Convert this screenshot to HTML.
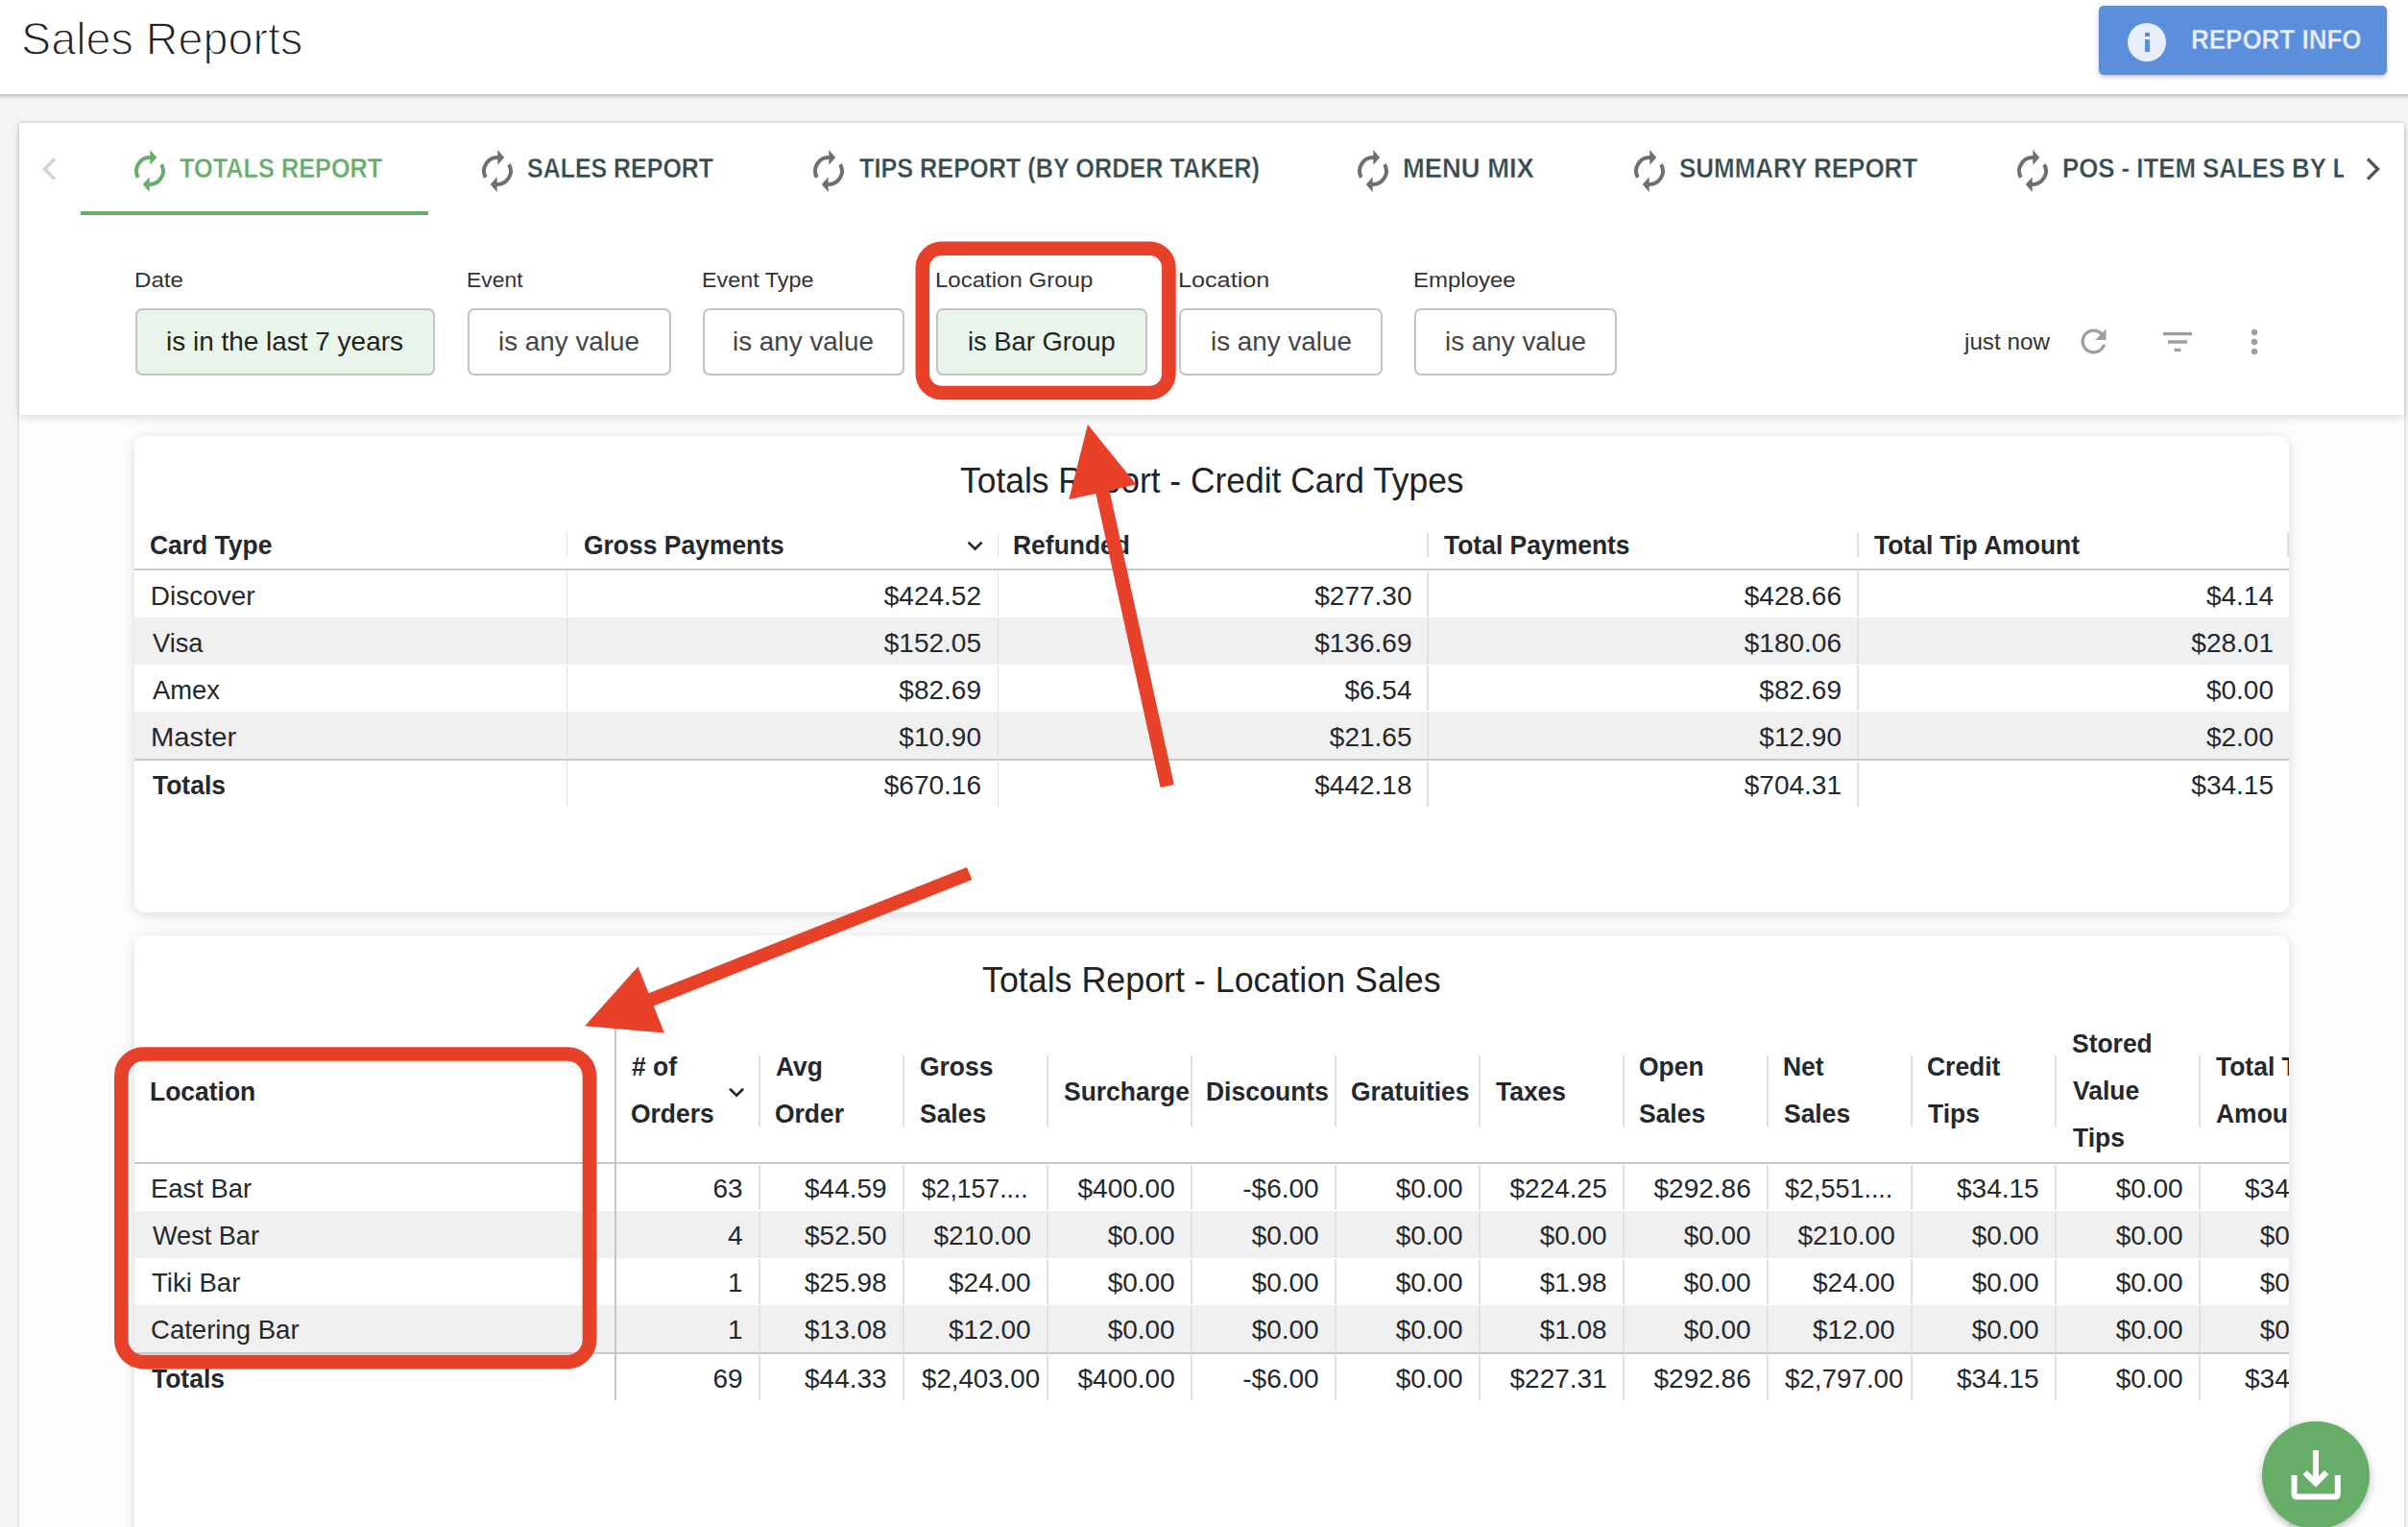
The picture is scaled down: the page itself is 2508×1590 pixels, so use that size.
<!DOCTYPE html>
<html><head><meta charset="utf-8"><title>Sales Reports</title><style>*{margin:0;padding:0}
html,body{width:2508px;height:1590px;overflow:hidden;background:#f4f5f7;font-family:"Liberation Sans",sans-serif;position:relative}
.t{position:absolute;white-space:nowrap;line-height:1;transform-origin:0 0}
.r{position:absolute}
</style></head><body>
<div class="r" style="left:-20px;top:-20px;width:2548px;height:118px;background:#fff;box-shadow:0 1.5px 5px rgba(0,0,0,.30);z-index:2"></div>
<div class="t" style="left:21.86px;top:17.36px;font-size:48px;color:#222;transform:scaleX(0.9731);z-index:3;-webkit-text-stroke:1.3px #fff;">Sales Reports</div>
<div class="r" style="left:2186px;top:6px;width:300px;height:71.5px;background:#5c8fdb;border-radius:5px;box-shadow:0 2px 5px rgba(0,0,0,.25);z-index:3"></div>
<div class="r" style="left:2216px;top:24px;width:40px;height:40px;border-radius:50%;background:#e8eefa;z-index:4"></div>
<div class="r" style="left:2233.5px;top:33.7px;width:5px;height:4.4px;background:#5c8fdb;z-index:5"></div>
<div class="r" style="left:2233.5px;top:40.7px;width:5px;height:13px;background:#5c8fdb;z-index:5"></div>
<div class="t" style="left:2281.70px;top:26.65px;font-size:29px;color:#e9eefa;font-weight:700;transform:scaleX(0.8954);z-index:5;-webkit-text-stroke:0.35px #5c8fdb;">REPORT INFO</div>
<div class="r" style="left:20px;top:128px;width:2484px;height:1600px;background:#fefefe;box-shadow:0 0 3px rgba(0,0,0,.22)"></div>
<div class="r" style="left:20px;top:128px;width:2484px;height:304px;background:#fff;box-shadow:0 3px 10px rgba(0,0,0,.14);z-index:1"></div>
<svg class="r" style="left:136.00px;top:153.90px;z-index:2" width="40" height="48" viewBox="-20 -24 40 48">
<path d="M -12.157 6.739 A 13.9 13.9 0 0 1 1.5 -13.82" fill="none" stroke="#66ad68" stroke-width="4"/>
<path d="M 12.157 -6.739 A 13.9 13.9 0 0 1 -1.5 13.82" fill="none" stroke="#66ad68" stroke-width="4"/>
<path d="M 0.3 -22 L 7.2 -14.1 L 0.3 -6.3 Z" fill="#66ad68"/>
<path d="M -0.3 22 L -7.2 14.1 L -0.3 6.3 Z" fill="#66ad68"/>
</svg>
<div class="t" style="left:186.74px;top:160.65px;font-size:29px;color:#66ad68;font-weight:700;transform:scaleX(0.8725);z-index:2;-webkit-text-stroke:0.35px #fff;">TOTALS REPORT</div>
<svg class="r" style="left:497.90px;top:153.90px;z-index:2" width="40" height="48" viewBox="-20 -24 40 48">
<path d="M -12.157 6.739 A 13.9 13.9 0 0 1 1.5 -13.82" fill="none" stroke="#6f6f6f" stroke-width="4"/>
<path d="M 12.157 -6.739 A 13.9 13.9 0 0 1 -1.5 13.82" fill="none" stroke="#6f6f6f" stroke-width="4"/>
<path d="M 0.3 -22 L 7.2 -14.1 L 0.3 -6.3 Z" fill="#6f6f6f"/>
<path d="M -0.3 22 L -7.2 14.1 L -0.3 6.3 Z" fill="#6f6f6f"/>
</svg>
<div class="t" style="left:549.21px;top:160.65px;font-size:29px;color:#354a4c;font-weight:700;transform:scaleX(0.8601);z-index:2;-webkit-text-stroke:0.35px #fff;">SALES REPORT</div>
<svg class="r" style="left:843.30px;top:153.90px;z-index:2" width="40" height="48" viewBox="-20 -24 40 48">
<path d="M -12.157 6.739 A 13.9 13.9 0 0 1 1.5 -13.82" fill="none" stroke="#6f6f6f" stroke-width="4"/>
<path d="M 12.157 -6.739 A 13.9 13.9 0 0 1 -1.5 13.82" fill="none" stroke="#6f6f6f" stroke-width="4"/>
<path d="M 0.3 -22 L 7.2 -14.1 L 0.3 -6.3 Z" fill="#6f6f6f"/>
<path d="M -0.3 22 L -7.2 14.1 L -0.3 6.3 Z" fill="#6f6f6f"/>
</svg>
<div class="t" style="left:894.54px;top:160.65px;font-size:29px;color:#354a4c;font-weight:700;transform:scaleX(0.8703);z-index:2;-webkit-text-stroke:0.35px #fff;">TIPS REPORT (BY ORDER TAKER)</div>
<svg class="r" style="left:1409.90px;top:153.90px;z-index:2" width="40" height="48" viewBox="-20 -24 40 48">
<path d="M -12.157 6.739 A 13.9 13.9 0 0 1 1.5 -13.82" fill="none" stroke="#6f6f6f" stroke-width="4"/>
<path d="M 12.157 -6.739 A 13.9 13.9 0 0 1 -1.5 13.82" fill="none" stroke="#6f6f6f" stroke-width="4"/>
<path d="M 0.3 -22 L 7.2 -14.1 L 0.3 -6.3 Z" fill="#6f6f6f"/>
<path d="M -0.3 22 L -7.2 14.1 L -0.3 6.3 Z" fill="#6f6f6f"/>
</svg>
<div class="t" style="left:1461.21px;top:160.65px;font-size:29px;color:#354a4c;font-weight:700;transform:scaleX(0.9440);z-index:2;-webkit-text-stroke:0.35px #fff;">MENU MIX</div>
<svg class="r" style="left:1697.50px;top:153.90px;z-index:2" width="40" height="48" viewBox="-20 -24 40 48">
<path d="M -12.157 6.739 A 13.9 13.9 0 0 1 1.5 -13.82" fill="none" stroke="#6f6f6f" stroke-width="4"/>
<path d="M 12.157 -6.739 A 13.9 13.9 0 0 1 -1.5 13.82" fill="none" stroke="#6f6f6f" stroke-width="4"/>
<path d="M 0.3 -22 L 7.2 -14.1 L 0.3 -6.3 Z" fill="#6f6f6f"/>
<path d="M -0.3 22 L -7.2 14.1 L -0.3 6.3 Z" fill="#6f6f6f"/>
</svg>
<div class="t" style="left:1748.98px;top:160.65px;font-size:29px;color:#354a4c;font-weight:700;transform:scaleX(0.8957);z-index:2;-webkit-text-stroke:0.35px #fff;">SUMMARY REPORT</div>
<svg class="r" style="left:2096.50px;top:153.90px;z-index:2" width="40" height="48" viewBox="-20 -24 40 48">
<path d="M -12.157 6.739 A 13.9 13.9 0 0 1 1.5 -13.82" fill="none" stroke="#6f6f6f" stroke-width="4"/>
<path d="M 12.157 -6.739 A 13.9 13.9 0 0 1 -1.5 13.82" fill="none" stroke="#6f6f6f" stroke-width="4"/>
<path d="M 0.3 -22 L 7.2 -14.1 L 0.3 -6.3 Z" fill="#6f6f6f"/>
<path d="M -0.3 22 L -7.2 14.1 L -0.3 6.3 Z" fill="#6f6f6f"/>
</svg>
<div class="r" style="left:0;top:120px;width:2441px;height:120px;overflow:hidden;z-index:2">
<div class="t" style="left:2147.51px;top:40.65px;font-size:29px;color:#354a4c;font-weight:700;transform:scaleX(0.8885);-webkit-text-stroke:0.35px #fff;">POS - ITEM SALES BY LOCATION</div>
</div>
<div class="r" style="left:84.20px;top:220.00px;width:361.60px;height:4.00px;background:#66ad68;z-index:2;"></div>
<svg class="r" style="left:36px;top:160px;z-index:2" width="30" height="32" viewBox="0 0 30 32"><path d="M 21 5.5 L 10.5 16 L 21 26.5" fill="none" stroke="#d6d6d6" stroke-width="3.6"/></svg>
<svg class="r" style="left:2456px;top:160px;z-index:2" width="30" height="32" viewBox="0 0 30 32"><path d="M 10 5.5 L 20.5 16 L 10 26.5" fill="none" stroke="#555" stroke-width="3.4"/></svg>
<div class="t" style="left:139.57px;top:280.95px;font-size:22.5px;color:#333;transform:scaleX(1.0716);z-index:2;">Date</div>
<div class="r" style="left:140.50px;top:320.6px;width:312.90px;height:70.8px;box-sizing:border-box;border:2px solid #c3c3c3;border-radius:7px;background:#e9f4ea;z-index:2"></div>
<div class="t" style="left:173.05px;top:342.29px;font-size:28px;color:#1e2420;transform:scaleX(0.9980);z-index:3;">is in the last 7 years</div>
<div class="t" style="left:485.97px;top:280.95px;font-size:22.5px;color:#333;transform:scaleX(1.0180);z-index:2;">Event</div>
<div class="r" style="left:486.80px;top:320.6px;width:211.80px;height:70.8px;box-sizing:border-box;border:2px solid #c3c3c3;border-radius:7px;background:#fff;z-index:2"></div>
<div class="t" style="left:518.91px;top:342.29px;font-size:28px;color:#454545;transform:scaleX(0.9938);z-index:3;">is any value</div>
<div class="t" style="left:730.83px;top:280.95px;font-size:22.5px;color:#333;transform:scaleX(1.0393);z-index:2;">Event Type</div>
<div class="r" style="left:731.70px;top:320.6px;width:210.60px;height:70.8px;box-sizing:border-box;border:2px solid #c3c3c3;border-radius:7px;background:#fff;z-index:2"></div>
<div class="t" style="left:763.21px;top:342.29px;font-size:28px;color:#454545;transform:scaleX(0.9938);z-index:3;">is any value</div>
<div class="t" style="left:974.48px;top:280.95px;font-size:22.5px;color:#333;transform:scaleX(1.0675);z-index:2;">Location Group</div>
<div class="r" style="left:975.40px;top:320.6px;width:220.10px;height:70.8px;box-sizing:border-box;border:2px solid #c3c3c3;border-radius:7px;background:#e9f4ea;z-index:2"></div>
<div class="t" style="left:1008.29px;top:342.29px;font-size:28px;color:#1e2420;transform:scaleX(0.9773);z-index:3;">is Bar Group</div>
<div class="t" style="left:1227.38px;top:280.95px;font-size:22.5px;color:#333;transform:scaleX(1.1197);z-index:2;">Location</div>
<div class="r" style="left:1228.40px;top:320.6px;width:212.10px;height:70.8px;box-sizing:border-box;border:2px solid #c3c3c3;border-radius:7px;background:#fff;z-index:2"></div>
<div class="t" style="left:1260.66px;top:342.29px;font-size:28px;color:#454545;transform:scaleX(0.9938);z-index:3;">is any value</div>
<div class="t" style="left:1471.78px;top:280.95px;font-size:22.5px;color:#333;transform:scaleX(1.0658);z-index:2;">Employee</div>
<div class="r" style="left:1472.70px;top:320.6px;width:211.70px;height:70.8px;box-sizing:border-box;border:2px solid #c3c3c3;border-radius:7px;background:#fff;z-index:2"></div>
<div class="t" style="left:1504.76px;top:342.29px;font-size:28px;color:#454545;transform:scaleX(0.9938);z-index:3;">is any value</div>
<div class="t" style="left:2046.01px;top:343.78px;font-size:24px;color:#333;transform:scaleX(1.0101);z-index:2;">just now</div>
<svg class="r" style="left:2160.8px;top:335.9px;z-index:2" width="39.1" height="39.1" viewBox="0 0 24 24"><path fill="#9e9e9e" d="M17.65 6.35C16.2 4.9 14.21 4 12 4c-4.42 0-7.99 3.58-7.99 8s3.57 8 7.99 8c3.73 0 6.84-2.55 7.73-6h-2.08c-.82 2.33-3.04 4-5.65 4-3.31 0-6-2.69-6-6s2.69-6 6-6c1.66 0 3.14.69 4.22 1.78L13 11h7V4l-2.35 2.35z"/></svg>
<svg class="r" style="left:2247.9px;top:335.7px;z-index:2" width="40" height="40" viewBox="0 0 24 24"><path fill="#9e9e9e" d="M10 18h4v-2h-4v2zM3 6v2h18V6H3zm3 7h12v-2H6v2z"/></svg>
<svg class="r" style="left:2327.8px;top:335.7px;z-index:2" width="40" height="40" viewBox="0 0 24 24"><path fill="#9e9e9e" d="M12 8c1.1 0 2-.9 2-2s-.9-2-2-2-2 .9-2 2 .9 2 2 2zm0 2c-1.1 0-2 .9-2 2s.9 2 2 2 2-.9 2-2-.9-2-2-2zm0 6c-1.1 0-2 .9-2 2s.9 2 2 2 2-.9 2-2-.9-2-2-2z"/></svg>
<div class="r" style="left:140px;top:454px;width:2244px;height:496px;background:#fff;border-radius:10px;box-shadow:0 3px 12px rgba(0,0,0,.11),0 0 28px rgba(0,0,0,.05);"></div>
<div class="t" style="left:999.72px;top:482.80px;font-size:36.5px;color:#222;transform:scaleX(0.9697);">Totals Report - Credit Card Types</div>
<div class="t" style="left:155.56px;top:553.59px;font-size:28px;color:#24282c;font-weight:700;transform:scaleX(0.9448);">Card Type</div>
<div class="t" style="left:607.66px;top:553.59px;font-size:28px;color:#24282c;font-weight:700;transform:scaleX(0.9448);">Gross Payments</div>
<div class="t" style="left:1055.40px;top:553.59px;font-size:28px;color:#24282c;font-weight:700;transform:scaleX(0.9448);">Refunded</div>
<div class="t" style="left:1504.42px;top:553.59px;font-size:28px;color:#24282c;font-weight:700;transform:scaleX(0.9448);">Total Payments</div>
<div class="t" style="left:1952.12px;top:553.59px;font-size:28px;color:#24282c;font-weight:700;transform:scaleX(0.9448);">Total Tip Amount</div>
<div class="r" style="left:589.85px;top:555.30px;width:1.60px;height:24.50px;background:#dfe0e2;"></div>
<div class="r" style="left:1038.55px;top:555.30px;width:1.60px;height:24.50px;background:#dfe0e2;"></div>
<div class="r" style="left:1486.25px;top:555.30px;width:1.60px;height:24.50px;background:#dfe0e2;"></div>
<div class="r" style="left:1934.25px;top:555.30px;width:1.60px;height:24.50px;background:#dfe0e2;"></div>
<div class="r" style="left:2382.25px;top:555.30px;width:1.60px;height:24.50px;background:#dfe0e2;"></div>
<svg class="r" style="left:1000px;top:555px" width="32" height="24" viewBox="1000 555 32 24"><path d="M 1008.6 564.6 L 1015.6 571.6 L 1022.6 564.6" fill="none" stroke="#24282c" stroke-width="2.7"/></svg>
<div class="r" style="left:140.00px;top:592.00px;width:2244.00px;height:2.20px;background:#c6cacd;"></div>
<div class="r" style="left:589.85px;top:594.80px;width:1.60px;height:47.40px;background:#dfe0e2;"></div>
<div class="r" style="left:1038.55px;top:594.80px;width:1.60px;height:47.40px;background:#dfe0e2;"></div>
<div class="r" style="left:1486.25px;top:594.80px;width:1.60px;height:47.40px;background:#dfe0e2;"></div>
<div class="r" style="left:1934.25px;top:594.80px;width:1.60px;height:47.40px;background:#dfe0e2;"></div>
<div class="t" style="left:156.70px;top:606.59px;font-size:28px;color:#24282c;">Discover</div>
<div class="t" style="left:920.79px;top:606.59px;font-size:28px;color:#24282c;">$424.52</div>
<div class="t" style="left:1369.29px;top:606.59px;font-size:28px;color:#24282c;">$277.30</div>
<div class="t" style="left:1816.79px;top:606.59px;font-size:28px;color:#24282c;">$428.66</div>
<div class="t" style="left:2297.93px;top:606.59px;font-size:28px;color:#24282c;">$4.14</div>
<div class="r" style="left:140.00px;top:643.00px;width:2244.00px;height:49.00px;background:#f0f0f0;"></div>
<div class="r" style="left:589.85px;top:643.80px;width:1.60px;height:47.40px;background:#dfe0e2;"></div>
<div class="r" style="left:1038.55px;top:643.80px;width:1.60px;height:47.40px;background:#dfe0e2;"></div>
<div class="r" style="left:1486.25px;top:643.80px;width:1.60px;height:47.40px;background:#dfe0e2;"></div>
<div class="r" style="left:1934.25px;top:643.80px;width:1.60px;height:47.40px;background:#dfe0e2;"></div>
<div class="t" style="left:158.90px;top:655.59px;font-size:28px;color:#24282c;transform:scaleX(0.9703);">Visa</div>
<div class="t" style="left:920.79px;top:655.59px;font-size:28px;color:#24282c;">$152.05</div>
<div class="t" style="left:1369.29px;top:655.59px;font-size:28px;color:#24282c;">$136.69</div>
<div class="t" style="left:1816.79px;top:655.59px;font-size:28px;color:#24282c;">$180.06</div>
<div class="t" style="left:2282.36px;top:655.59px;font-size:28px;color:#24282c;">$28.01</div>
<div class="r" style="left:589.85px;top:692.80px;width:1.60px;height:47.40px;background:#dfe0e2;"></div>
<div class="r" style="left:1038.55px;top:692.80px;width:1.60px;height:47.40px;background:#dfe0e2;"></div>
<div class="r" style="left:1486.25px;top:692.80px;width:1.60px;height:47.40px;background:#dfe0e2;"></div>
<div class="r" style="left:1934.25px;top:692.80px;width:1.60px;height:47.40px;background:#dfe0e2;"></div>
<div class="t" style="left:158.90px;top:704.59px;font-size:28px;color:#24282c;transform:scaleX(0.9789);">Amex</div>
<div class="t" style="left:936.36px;top:704.59px;font-size:28px;color:#24282c;">$82.69</div>
<div class="t" style="left:1400.43px;top:704.59px;font-size:28px;color:#24282c;">$6.54</div>
<div class="t" style="left:1832.36px;top:704.59px;font-size:28px;color:#24282c;">$82.69</div>
<div class="t" style="left:2297.93px;top:704.59px;font-size:28px;color:#24282c;">$0.00</div>
<div class="r" style="left:140.00px;top:741.00px;width:2244.00px;height:49.00px;background:#f0f0f0;"></div>
<div class="r" style="left:589.85px;top:741.80px;width:1.60px;height:47.40px;background:#dfe0e2;"></div>
<div class="r" style="left:1038.55px;top:741.80px;width:1.60px;height:47.40px;background:#dfe0e2;"></div>
<div class="r" style="left:1486.25px;top:741.80px;width:1.60px;height:47.40px;background:#dfe0e2;"></div>
<div class="r" style="left:1934.25px;top:741.80px;width:1.60px;height:47.40px;background:#dfe0e2;"></div>
<div class="t" style="left:156.60px;top:753.59px;font-size:28px;color:#24282c;transform:scaleX(1.0423);">Master</div>
<div class="t" style="left:936.36px;top:753.59px;font-size:28px;color:#24282c;">$10.90</div>
<div class="t" style="left:1384.86px;top:753.59px;font-size:28px;color:#24282c;">$21.65</div>
<div class="t" style="left:1832.36px;top:753.59px;font-size:28px;color:#24282c;">$12.90</div>
<div class="t" style="left:2297.93px;top:753.59px;font-size:28px;color:#24282c;">$2.00</div>
<div class="r" style="left:140.00px;top:790.30px;width:2244.00px;height:2.20px;background:#c6cacd;"></div>
<div class="r" style="left:589.85px;top:793.00px;width:1.60px;height:47.00px;background:#dfe0e2;"></div>
<div class="r" style="left:1038.55px;top:793.00px;width:1.60px;height:47.00px;background:#dfe0e2;"></div>
<div class="r" style="left:1486.25px;top:793.00px;width:1.60px;height:47.00px;background:#dfe0e2;"></div>
<div class="r" style="left:1934.25px;top:793.00px;width:1.60px;height:47.00px;background:#dfe0e2;"></div>
<div class="t" style="left:158.72px;top:803.89px;font-size:28px;color:#24282c;font-weight:700;transform:scaleX(0.9448);">Totals</div>
<div class="t" style="left:920.79px;top:803.89px;font-size:28px;color:#24282c;">$670.16</div>
<div class="t" style="left:1369.29px;top:803.89px;font-size:28px;color:#24282c;">$442.18</div>
<div class="t" style="left:1816.79px;top:803.89px;font-size:28px;color:#24282c;">$704.31</div>
<div class="t" style="left:2282.36px;top:803.89px;font-size:28px;color:#24282c;">$34.15</div>
<div class="r" style="left:140px;top:974px;width:2244px;height:700px;background:#fff;border-radius:10px;box-shadow:0 3px 12px rgba(0,0,0,.11),0 0 28px rgba(0,0,0,.05);"></div>
<div class="t" style="left:1023.42px;top:1002.90px;font-size:36.5px;color:#222;transform:scaleX(0.9808);">Totals Report - Location Sales</div>
<div class="r" style="left:140px;top:974px;width:2244px;height:700px;overflow:hidden">
<div class="t" style="left:15.50px;top:148.59px;font-size:28px;color:#24282c;font-weight:700;transform:scaleX(0.9448);">Location</div>
<div class="t" style="left:518.03px;top:122.89px;font-size:28px;color:#24282c;font-weight:700;transform:scaleX(0.9448);"># of</div>
<div class="t" style="left:517.46px;top:171.79px;font-size:28px;color:#24282c;font-weight:700;transform:scaleX(0.9448);">Orders</div>
<div class="t" style="left:667.54px;top:122.89px;font-size:28px;color:#24282c;font-weight:700;transform:scaleX(0.9448);">Avg</div>
<div class="t" style="left:667.16px;top:171.79px;font-size:28px;color:#24282c;font-weight:700;transform:scaleX(0.9448);">Order</div>
<div class="t" style="left:817.86px;top:122.89px;font-size:28px;color:#24282c;font-weight:700;transform:scaleX(0.9448);">Gross</div>
<div class="t" style="left:818.14px;top:171.79px;font-size:28px;color:#24282c;font-weight:700;transform:scaleX(0.9448);">Sales</div>
<div class="r" style="left:951px;top:116px;width:150px;height:80px;overflow:hidden">
<div class="t" style="left:16.74px;top:32.59px;font-size:28px;color:#24282c;font-weight:700;transform:scaleX(0.9448);">Surcharges</div>
</div>
<div class="t" style="left:1116.20px;top:148.59px;font-size:28px;color:#24282c;font-weight:700;transform:scaleX(0.9448);">Discounts</div>
<div class="t" style="left:1267.26px;top:148.59px;font-size:28px;color:#24282c;font-weight:700;transform:scaleX(0.9448);">Gratuities</div>
<div class="t" style="left:1418.22px;top:148.59px;font-size:28px;color:#24282c;font-weight:700;transform:scaleX(0.9448);">Taxes</div>
<div class="t" style="left:1567.16px;top:122.89px;font-size:28px;color:#24282c;font-weight:700;transform:scaleX(0.9448);">Open</div>
<div class="t" style="left:1567.44px;top:171.79px;font-size:28px;color:#24282c;font-weight:700;transform:scaleX(0.9448);">Sales</div>
<div class="t" style="left:1716.70px;top:122.89px;font-size:28px;color:#24282c;font-weight:700;transform:scaleX(0.9448);">Net</div>
<div class="t" style="left:1717.74px;top:171.79px;font-size:28px;color:#24282c;font-weight:700;transform:scaleX(0.9448);">Sales</div>
<div class="t" style="left:1867.06px;top:122.89px;font-size:28px;color:#24282c;font-weight:700;transform:scaleX(0.9448);">Credit</div>
<div class="t" style="left:1867.82px;top:171.79px;font-size:28px;color:#24282c;font-weight:700;transform:scaleX(0.9448);">Tips</div>
<div class="t" style="left:2018.04px;top:99.09px;font-size:28px;color:#24282c;font-weight:700;transform:scaleX(0.9448);">Stored</div>
<div class="t" style="left:2018.61px;top:147.69px;font-size:28px;color:#24282c;font-weight:700;transform:scaleX(0.9448);">Value</div>
<div class="t" style="left:2018.52px;top:196.69px;font-size:28px;color:#24282c;font-weight:700;transform:scaleX(0.9448);">Tips</div>
<div class="t" style="left:2167.92px;top:122.89px;font-size:28px;color:#24282c;font-weight:700;transform:scaleX(0.9448);">Total Tip</div>
<div class="t" style="left:2167.54px;top:171.79px;font-size:28px;color:#24282c;font-weight:700;transform:scaleX(0.9448);">Amount</div>
<div class="r" style="left:650.15px;top:125.30px;width:1.60px;height:73.50px;background:#dfe0e2;"></div>
<div class="r" style="left:800.25px;top:125.30px;width:1.60px;height:73.50px;background:#dfe0e2;"></div>
<div class="r" style="left:950.25px;top:125.30px;width:1.60px;height:73.50px;background:#dfe0e2;"></div>
<div class="r" style="left:1100.25px;top:125.30px;width:1.60px;height:73.50px;background:#dfe0e2;"></div>
<div class="r" style="left:1250.25px;top:125.30px;width:1.60px;height:73.50px;background:#dfe0e2;"></div>
<div class="r" style="left:1400.25px;top:125.30px;width:1.60px;height:73.50px;background:#dfe0e2;"></div>
<div class="r" style="left:1550.25px;top:125.30px;width:1.60px;height:73.50px;background:#dfe0e2;"></div>
<div class="r" style="left:1700.25px;top:125.30px;width:1.60px;height:73.50px;background:#dfe0e2;"></div>
<div class="r" style="left:1850.25px;top:125.30px;width:1.60px;height:73.50px;background:#dfe0e2;"></div>
<div class="r" style="left:2000.25px;top:125.30px;width:1.60px;height:73.50px;background:#dfe0e2;"></div>
<div class="r" style="left:2150.25px;top:125.30px;width:1.60px;height:73.50px;background:#dfe0e2;"></div>
<div class="r" style="left:499.70px;top:97.00px;width:2.00px;height:387.00px;background:#c2c6c9;z-index:1;"></div>
<svg class="r" style="left:610px;top:151px" width="30" height="24" viewBox="750 1125 30 24"><path d="M 760.1 1133.7 L 767.1 1140.7 L 774.1 1133.7" fill="none" stroke="#24282c" stroke-width="2.7"/></svg>
<div class="r" style="left:0.00px;top:236.00px;width:2244.00px;height:2.20px;background:#c6cacd;"></div>
<div class="r" style="left:650.15px;top:238.80px;width:1.60px;height:47.40px;background:#dfe0e2;"></div>
<div class="r" style="left:800.25px;top:238.80px;width:1.60px;height:47.40px;background:#dfe0e2;"></div>
<div class="r" style="left:950.25px;top:238.80px;width:1.60px;height:47.40px;background:#dfe0e2;"></div>
<div class="r" style="left:1100.25px;top:238.80px;width:1.60px;height:47.40px;background:#dfe0e2;"></div>
<div class="r" style="left:1250.25px;top:238.80px;width:1.60px;height:47.40px;background:#dfe0e2;"></div>
<div class="r" style="left:1400.25px;top:238.80px;width:1.60px;height:47.40px;background:#dfe0e2;"></div>
<div class="r" style="left:1550.25px;top:238.80px;width:1.60px;height:47.40px;background:#dfe0e2;"></div>
<div class="r" style="left:1700.25px;top:238.80px;width:1.60px;height:47.40px;background:#dfe0e2;"></div>
<div class="r" style="left:1850.25px;top:238.80px;width:1.60px;height:47.40px;background:#dfe0e2;"></div>
<div class="r" style="left:2000.25px;top:238.80px;width:1.60px;height:47.40px;background:#dfe0e2;"></div>
<div class="r" style="left:2150.25px;top:238.80px;width:1.60px;height:47.40px;background:#dfe0e2;"></div>
<div class="t" style="left:16.55px;top:249.79px;font-size:28px;color:#24282c;transform:scaleX(0.9790);">East Bar</div>
<div class="t" style="left:602.46px;top:249.79px;font-size:28px;color:#24282c;">63</div>
<div class="t" style="left:698.06px;top:249.79px;font-size:28px;color:#24282c;">$44.59</div>
<div class="t" style="left:982.49px;top:249.79px;font-size:28px;color:#24282c;">$400.00</div>
<div class="t" style="left:1154.31px;top:249.79px;font-size:28px;color:#24282c;">-$6.00</div>
<div class="t" style="left:1313.63px;top:249.79px;font-size:28px;color:#24282c;">$0.00</div>
<div class="t" style="left:1432.49px;top:249.79px;font-size:28px;color:#24282c;">$224.25</div>
<div class="t" style="left:1582.49px;top:249.79px;font-size:28px;color:#24282c;">$292.86</div>
<div class="t" style="left:1898.06px;top:249.79px;font-size:28px;color:#24282c;">$34.15</div>
<div class="t" style="left:2063.63px;top:249.79px;font-size:28px;color:#24282c;">$0.00</div>
<div class="t" style="left:2198.06px;top:249.79px;font-size:28px;color:#24282c;">$34.15</div>
<div class="r" style="left:0.00px;top:287.00px;width:2244.00px;height:49.00px;background:#f0f0f0;"></div>
<div class="r" style="left:650.15px;top:287.80px;width:1.60px;height:47.40px;background:#dfe0e2;"></div>
<div class="r" style="left:800.25px;top:287.80px;width:1.60px;height:47.40px;background:#dfe0e2;"></div>
<div class="r" style="left:950.25px;top:287.80px;width:1.60px;height:47.40px;background:#dfe0e2;"></div>
<div class="r" style="left:1100.25px;top:287.80px;width:1.60px;height:47.40px;background:#dfe0e2;"></div>
<div class="r" style="left:1250.25px;top:287.80px;width:1.60px;height:47.40px;background:#dfe0e2;"></div>
<div class="r" style="left:1400.25px;top:287.80px;width:1.60px;height:47.40px;background:#dfe0e2;"></div>
<div class="r" style="left:1550.25px;top:287.80px;width:1.60px;height:47.40px;background:#dfe0e2;"></div>
<div class="r" style="left:1700.25px;top:287.80px;width:1.60px;height:47.40px;background:#dfe0e2;"></div>
<div class="r" style="left:1850.25px;top:287.80px;width:1.60px;height:47.40px;background:#dfe0e2;"></div>
<div class="r" style="left:2000.25px;top:287.80px;width:1.60px;height:47.40px;background:#dfe0e2;"></div>
<div class="r" style="left:2150.25px;top:287.80px;width:1.60px;height:47.40px;background:#dfe0e2;"></div>
<div class="t" style="left:18.70px;top:298.79px;font-size:28px;color:#24282c;transform:scaleX(0.9676);">West Bar</div>
<div class="t" style="left:618.03px;top:298.79px;font-size:28px;color:#24282c;">4</div>
<div class="t" style="left:698.06px;top:298.79px;font-size:28px;color:#24282c;">$52.50</div>
<div class="t" style="left:832.49px;top:298.79px;font-size:28px;color:#24282c;">$210.00</div>
<div class="t" style="left:1013.63px;top:298.79px;font-size:28px;color:#24282c;">$0.00</div>
<div class="t" style="left:1163.63px;top:298.79px;font-size:28px;color:#24282c;">$0.00</div>
<div class="t" style="left:1313.63px;top:298.79px;font-size:28px;color:#24282c;">$0.00</div>
<div class="t" style="left:1463.63px;top:298.79px;font-size:28px;color:#24282c;">$0.00</div>
<div class="t" style="left:1613.63px;top:298.79px;font-size:28px;color:#24282c;">$0.00</div>
<div class="t" style="left:1732.49px;top:298.79px;font-size:28px;color:#24282c;">$210.00</div>
<div class="t" style="left:1913.63px;top:298.79px;font-size:28px;color:#24282c;">$0.00</div>
<div class="t" style="left:2063.63px;top:298.79px;font-size:28px;color:#24282c;">$0.00</div>
<div class="t" style="left:2213.63px;top:298.79px;font-size:28px;color:#24282c;">$0.00</div>
<div class="r" style="left:650.15px;top:336.80px;width:1.60px;height:47.40px;background:#dfe0e2;"></div>
<div class="r" style="left:800.25px;top:336.80px;width:1.60px;height:47.40px;background:#dfe0e2;"></div>
<div class="r" style="left:950.25px;top:336.80px;width:1.60px;height:47.40px;background:#dfe0e2;"></div>
<div class="r" style="left:1100.25px;top:336.80px;width:1.60px;height:47.40px;background:#dfe0e2;"></div>
<div class="r" style="left:1250.25px;top:336.80px;width:1.60px;height:47.40px;background:#dfe0e2;"></div>
<div class="r" style="left:1400.25px;top:336.80px;width:1.60px;height:47.40px;background:#dfe0e2;"></div>
<div class="r" style="left:1550.25px;top:336.80px;width:1.60px;height:47.40px;background:#dfe0e2;"></div>
<div class="r" style="left:1700.25px;top:336.80px;width:1.60px;height:47.40px;background:#dfe0e2;"></div>
<div class="r" style="left:1850.25px;top:336.80px;width:1.60px;height:47.40px;background:#dfe0e2;"></div>
<div class="r" style="left:2000.25px;top:336.80px;width:1.60px;height:47.40px;background:#dfe0e2;"></div>
<div class="r" style="left:2150.25px;top:336.80px;width:1.60px;height:47.40px;background:#dfe0e2;"></div>
<div class="t" style="left:18.21px;top:347.79px;font-size:28px;color:#24282c;transform:scaleX(0.9838);">Tiki Bar</div>
<div class="t" style="left:618.03px;top:347.79px;font-size:28px;color:#24282c;">1</div>
<div class="t" style="left:698.06px;top:347.79px;font-size:28px;color:#24282c;">$25.98</div>
<div class="t" style="left:848.06px;top:347.79px;font-size:28px;color:#24282c;">$24.00</div>
<div class="t" style="left:1013.63px;top:347.79px;font-size:28px;color:#24282c;">$0.00</div>
<div class="t" style="left:1163.63px;top:347.79px;font-size:28px;color:#24282c;">$0.00</div>
<div class="t" style="left:1313.63px;top:347.79px;font-size:28px;color:#24282c;">$0.00</div>
<div class="t" style="left:1463.63px;top:347.79px;font-size:28px;color:#24282c;">$1.98</div>
<div class="t" style="left:1613.63px;top:347.79px;font-size:28px;color:#24282c;">$0.00</div>
<div class="t" style="left:1748.06px;top:347.79px;font-size:28px;color:#24282c;">$24.00</div>
<div class="t" style="left:1913.63px;top:347.79px;font-size:28px;color:#24282c;">$0.00</div>
<div class="t" style="left:2063.63px;top:347.79px;font-size:28px;color:#24282c;">$0.00</div>
<div class="t" style="left:2213.63px;top:347.79px;font-size:28px;color:#24282c;">$0.00</div>
<div class="r" style="left:0.00px;top:385.00px;width:2244.00px;height:49.00px;background:#f0f0f0;"></div>
<div class="r" style="left:650.15px;top:385.80px;width:1.60px;height:47.40px;background:#dfe0e2;"></div>
<div class="r" style="left:800.25px;top:385.80px;width:1.60px;height:47.40px;background:#dfe0e2;"></div>
<div class="r" style="left:950.25px;top:385.80px;width:1.60px;height:47.40px;background:#dfe0e2;"></div>
<div class="r" style="left:1100.25px;top:385.80px;width:1.60px;height:47.40px;background:#dfe0e2;"></div>
<div class="r" style="left:1250.25px;top:385.80px;width:1.60px;height:47.40px;background:#dfe0e2;"></div>
<div class="r" style="left:1400.25px;top:385.80px;width:1.60px;height:47.40px;background:#dfe0e2;"></div>
<div class="r" style="left:1550.25px;top:385.80px;width:1.60px;height:47.40px;background:#dfe0e2;"></div>
<div class="r" style="left:1700.25px;top:385.80px;width:1.60px;height:47.40px;background:#dfe0e2;"></div>
<div class="r" style="left:1850.25px;top:385.80px;width:1.60px;height:47.40px;background:#dfe0e2;"></div>
<div class="r" style="left:2000.25px;top:385.80px;width:1.60px;height:47.40px;background:#dfe0e2;"></div>
<div class="r" style="left:2150.25px;top:385.80px;width:1.60px;height:47.40px;background:#dfe0e2;"></div>
<div class="t" style="left:17.42px;top:396.79px;font-size:28px;color:#24282c;transform:scaleX(0.9833);">Catering Bar</div>
<div class="t" style="left:618.03px;top:396.79px;font-size:28px;color:#24282c;">1</div>
<div class="t" style="left:698.06px;top:396.79px;font-size:28px;color:#24282c;">$13.08</div>
<div class="t" style="left:848.06px;top:396.79px;font-size:28px;color:#24282c;">$12.00</div>
<div class="t" style="left:1013.63px;top:396.79px;font-size:28px;color:#24282c;">$0.00</div>
<div class="t" style="left:1163.63px;top:396.79px;font-size:28px;color:#24282c;">$0.00</div>
<div class="t" style="left:1313.63px;top:396.79px;font-size:28px;color:#24282c;">$0.00</div>
<div class="t" style="left:1463.63px;top:396.79px;font-size:28px;color:#24282c;">$1.08</div>
<div class="t" style="left:1613.63px;top:396.79px;font-size:28px;color:#24282c;">$0.00</div>
<div class="t" style="left:1748.06px;top:396.79px;font-size:28px;color:#24282c;">$12.00</div>
<div class="t" style="left:1913.63px;top:396.79px;font-size:28px;color:#24282c;">$0.00</div>
<div class="t" style="left:2063.63px;top:396.79px;font-size:28px;color:#24282c;">$0.00</div>
<div class="t" style="left:2213.63px;top:396.79px;font-size:28px;color:#24282c;">$0.00</div>
<div class="t" style="left:820.42px;top:249.79px;font-size:28px;color:#24282c;transform:scaleX(0.9473);">$2,157....</div>
<div class="t" style="left:1719.41px;top:249.79px;font-size:28px;color:#24282c;transform:scaleX(0.9622);">$2,551....</div>
<div class="r" style="left:0.00px;top:434.20px;width:2244.00px;height:2.20px;background:#c6cacd;"></div>
<div class="r" style="left:650.15px;top:437.00px;width:1.60px;height:47.00px;background:#dfe0e2;"></div>
<div class="r" style="left:800.25px;top:437.00px;width:1.60px;height:47.00px;background:#dfe0e2;"></div>
<div class="r" style="left:950.25px;top:437.00px;width:1.60px;height:47.00px;background:#dfe0e2;"></div>
<div class="r" style="left:1100.25px;top:437.00px;width:1.60px;height:47.00px;background:#dfe0e2;"></div>
<div class="r" style="left:1250.25px;top:437.00px;width:1.60px;height:47.00px;background:#dfe0e2;"></div>
<div class="r" style="left:1400.25px;top:437.00px;width:1.60px;height:47.00px;background:#dfe0e2;"></div>
<div class="r" style="left:1550.25px;top:437.00px;width:1.60px;height:47.00px;background:#dfe0e2;"></div>
<div class="r" style="left:1700.25px;top:437.00px;width:1.60px;height:47.00px;background:#dfe0e2;"></div>
<div class="r" style="left:1850.25px;top:437.00px;width:1.60px;height:47.00px;background:#dfe0e2;"></div>
<div class="r" style="left:2000.25px;top:437.00px;width:1.60px;height:47.00px;background:#dfe0e2;"></div>
<div class="r" style="left:2150.25px;top:437.00px;width:1.60px;height:47.00px;background:#dfe0e2;"></div>
<div class="t" style="left:18.22px;top:447.59px;font-size:28px;color:#24282c;font-weight:700;transform:scaleX(0.9448);">Totals</div>
<div class="t" style="left:602.46px;top:447.59px;font-size:28px;color:#24282c;">69</div>
<div class="t" style="left:698.06px;top:447.59px;font-size:28px;color:#24282c;">$44.33</div>
<div class="t" style="left:982.49px;top:447.59px;font-size:28px;color:#24282c;">$400.00</div>
<div class="t" style="left:1154.31px;top:447.59px;font-size:28px;color:#24282c;">-$6.00</div>
<div class="t" style="left:1313.63px;top:447.59px;font-size:28px;color:#24282c;">$0.00</div>
<div class="t" style="left:1432.49px;top:447.59px;font-size:28px;color:#24282c;">$227.31</div>
<div class="t" style="left:1582.49px;top:447.59px;font-size:28px;color:#24282c;">$292.86</div>
<div class="t" style="left:1898.06px;top:447.59px;font-size:28px;color:#24282c;">$34.15</div>
<div class="t" style="left:2063.63px;top:447.59px;font-size:28px;color:#24282c;">$0.00</div>
<div class="t" style="left:2198.06px;top:447.59px;font-size:28px;color:#24282c;">$34.15</div>
<div class="t" style="left:820.20px;top:447.59px;font-size:28px;color:#24282c;transform:scaleX(0.9878);">$2,403.00</div>
<div class="t" style="left:1719.40px;top:447.59px;font-size:28px;color:#24282c;transform:scaleX(0.9911);">$2,797.00</div>
</div>
<svg class="r" style="left:0;top:0;z-index:10" width="2508" height="1590" viewBox="0 0 2508 1590">
<rect x="960.8" y="258.8" width="256.6" height="150.2" rx="20" ry="20" fill="none" stroke="#e8412a" stroke-width="14.6"/>
<rect x="126.3" y="1097.5" width="487.7" height="320.6" rx="23" ry="23" fill="none" stroke="#e8412a" stroke-width="14.6"/>
<polygon fill="#e8412a" points="1132.9,442 1183.5,504.6 1155.5,510.7 1222.8,816.9 1208.6,820.1 1141.3,513.9 1113.3,520.0"/>
<polygon fill="#e8412a" points="609.2,1068.2 691.9,1075.4 680.8,1047.5 1012.3,916.1 1007.0,902.9 675.6,1034.3 664.5,1006.4"/>
</svg>
<div class="r" style="left:2356.2px;top:1480px;width:111.6px;height:111.6px;border-radius:50%;background:#66ae67;box-shadow:0 3px 8px rgba(0,0,0,.28);z-index:11"></div>
<svg class="r" style="left:2356px;top:1480px;z-index:12" width="112" height="110" viewBox="2356 1480 112 110">
<line x1="2411.9" y1="1510" x2="2411.9" y2="1543" stroke="#fff" stroke-width="6"/>
<polyline points="2400.7,1533.2 2411.9,1544.4 2423.1,1533.2" fill="none" stroke="#fff" stroke-width="6"/>
<path d="M 2389.5 1536 V 1555.4 Q 2389.5 1558.4 2392.5 1558.4 H 2431.8 Q 2434.8 1558.4 2434.8 1555.4 V 1536" fill="none" stroke="#fff" stroke-width="6"/>
</svg>
</body></html>
